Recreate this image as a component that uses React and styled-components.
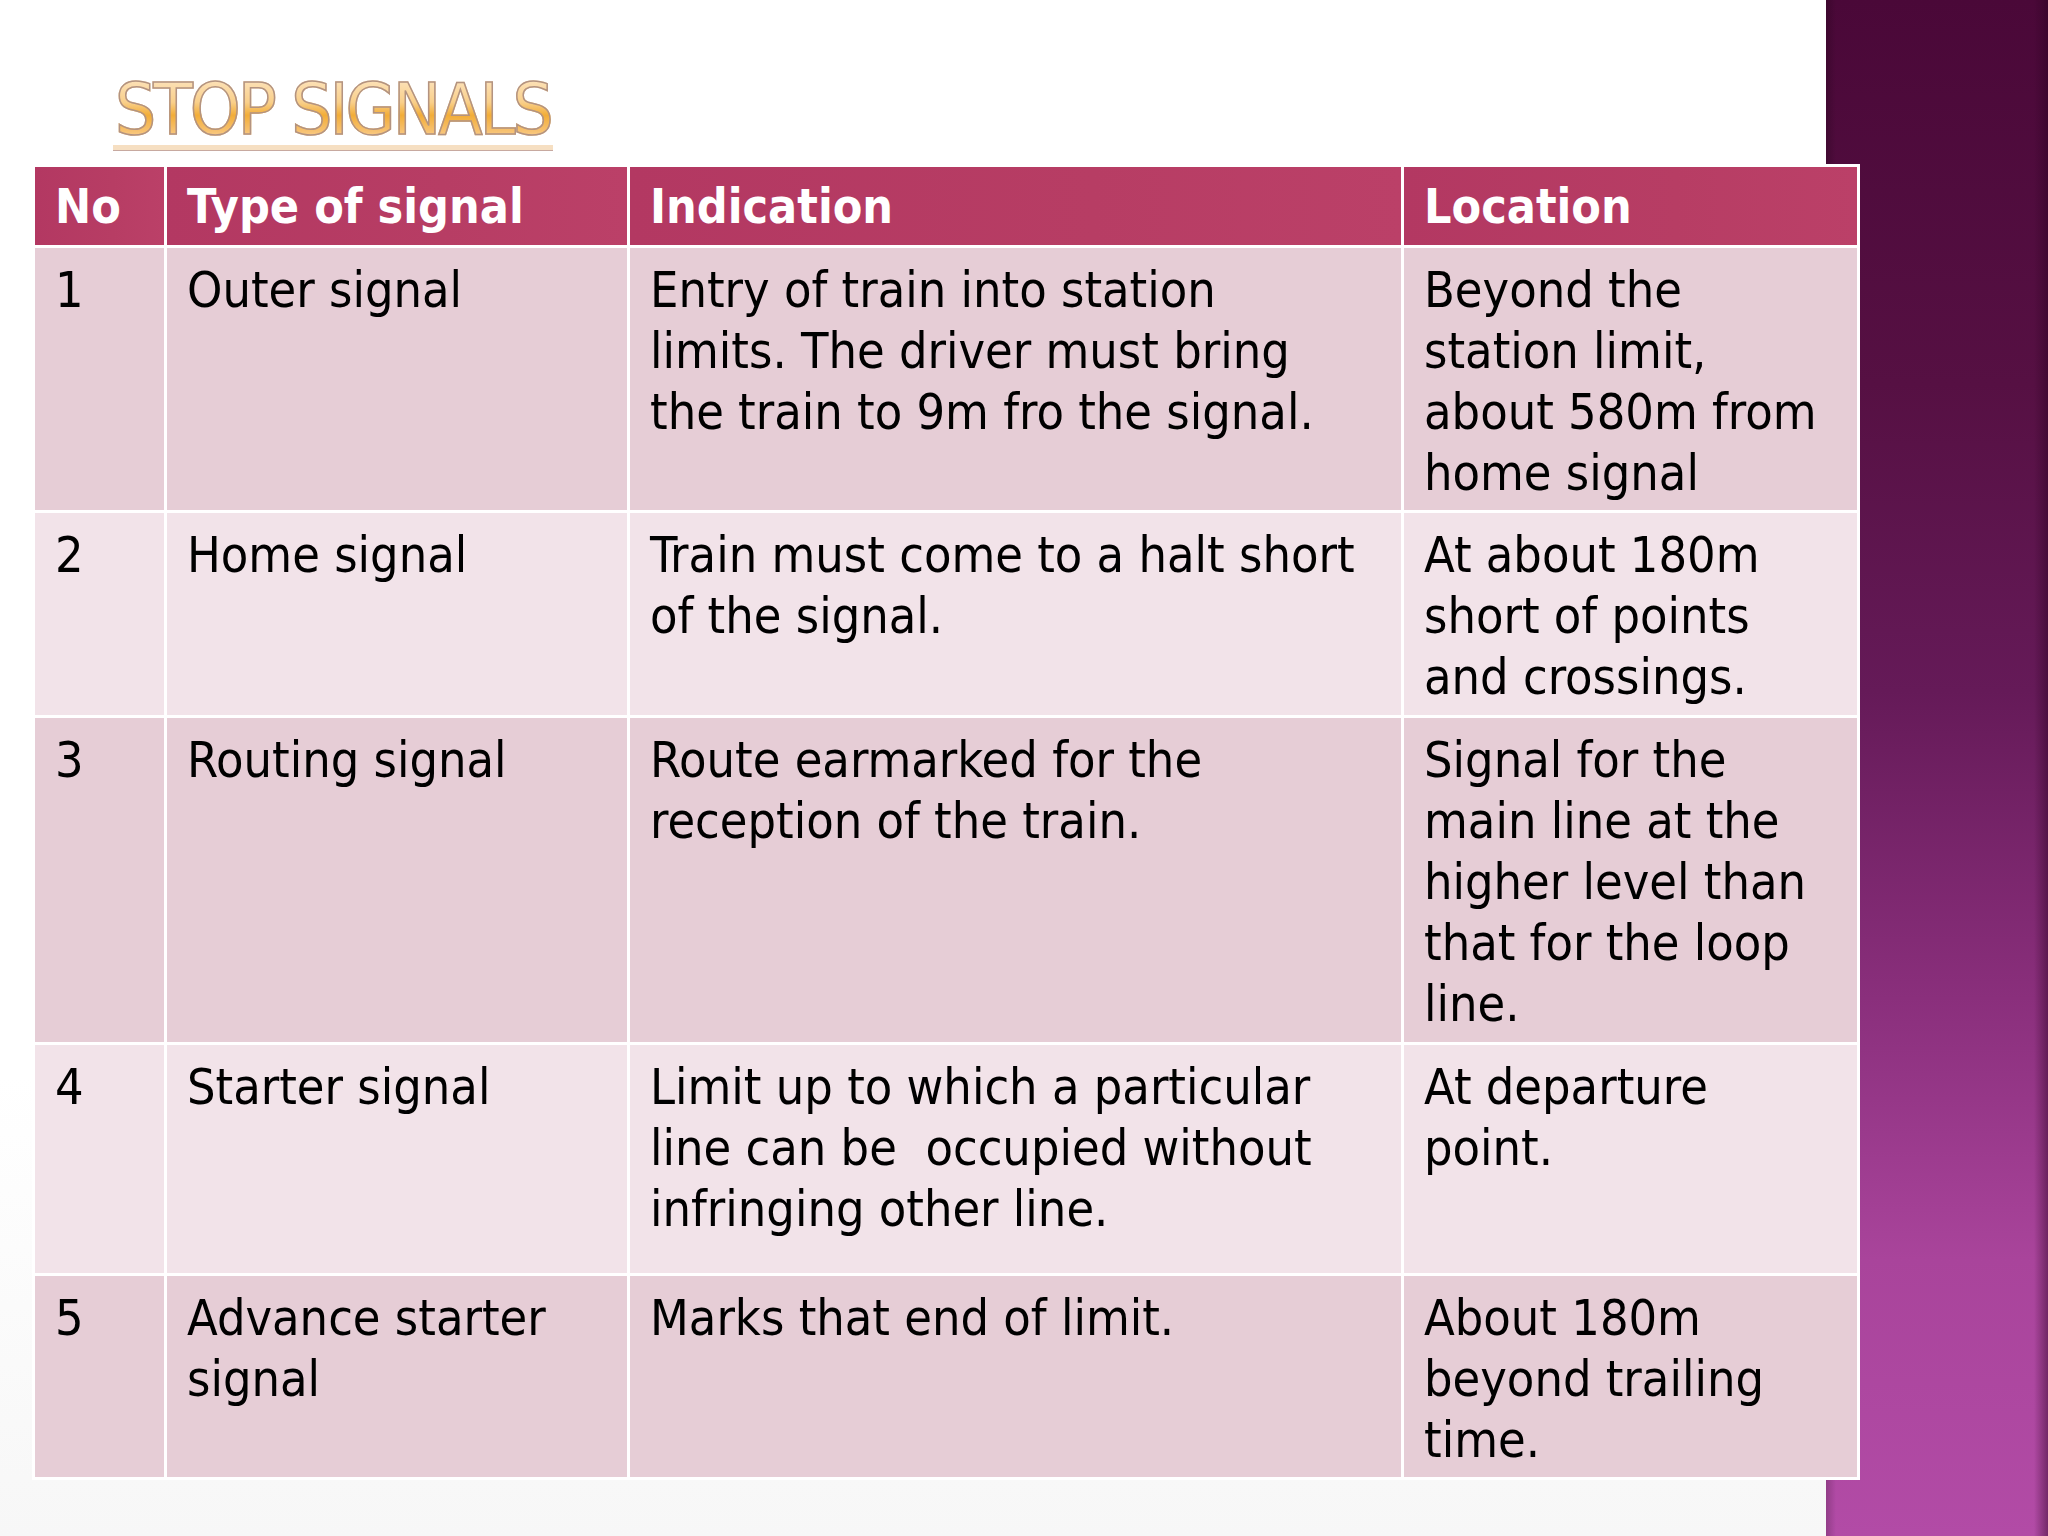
import React from 'react';
import styled, { createGlobalStyle } from 'styled-components';

const GlobalStyle = createGlobalStyle`
  html, body {
    margin: 0;
    padding: 0;
    background: #ffffff;
  }
`;

const FONT = `"Liberation Sans Narrow", "DejaVu Sans Condensed", "Liberation Sans", sans-serif`;

const Slide = styled.div`
  width: 2048px;
  height: 1536px;
  box-sizing: border-box;
  padding: 74px 0 0 35px;
  overflow: hidden;
  font-family: ${FONT};
  background:
    linear-gradient(90deg, rgba(0, 0, 0, 0.18) 0px, rgba(0, 0, 0, 0) 10px) 1826px 0 / 20px 100% no-repeat,
    linear-gradient(270deg, rgba(40, 0, 30, 0.45) 0px, rgba(40, 0, 30, 0) 14px) right 0 / 20px 100% no-repeat,
    linear-gradient(180deg, #4a0838 0%, #561043 25%, #651a58 45%, #8a2f7c 65%, #a9449b 82%, #b24ba6 100%) right 0 / 222px 100% no-repeat,
    linear-gradient(180deg, #ffffff 0%, #ffffff 70%, #f7f7f7 100%);
`;

const Title = styled.h1`
  display: inline-block;
  margin: 0 0 14px 78px;
  padding: 0 2px 1px;
  font-family: ${FONT};
  font-size: 72px;
  font-weight: 400;
  line-height: 70px;
  letter-spacing: -3px;
  color: transparent;
  background: linear-gradient(180deg, #fde6c4 0%, #f9cf8a 40%, #f2ad38 58%, #f7c170 80%, #fbdcae 100%);
  -webkit-background-clip: text;
  background-clip: text;
  -webkit-text-stroke: 1.5px #b39381;
  border-bottom: 5px solid #f6dfc2;
  box-shadow: 0 1px 0 #c7a9a0;
`;

const Table = styled.table`
  border-collapse: separate;
  border-spacing: 3px;
  background: #ffffff;
  table-layout: fixed;
  width: 1828px;
  margin-left: -3px;
`;

const HeadRow = styled.tr`
  height: 78px;
`;

const Row = styled.tr`
  height: ${p => p.$h}px;
`;

const HeadCell = styled.th`
  background: linear-gradient(90deg, #b33862 0%, #b73d64 60%, #bb4068 100%);
  color: #ffffff;
  text-align: left;
  vertical-align: middle;
  padding: 0 20px;
  font-family: ${FONT};
  font-size: 48px;
  font-weight: 700;
  line-height: 61px;
  white-space: nowrap;
`;

const Cell = styled.td`
  background: ${p => (p.$alt ? '#f2e3e9' : '#e6cdd6')};
  color: #000000;
  vertical-align: top;
  padding: 12px 20px 0;
  font-size: 50px;
  line-height: 61px;
  white-space: pre;
`;

const Line = styled.span`
  display: block;
`;

const widths = [129, 460, 771, 453];
const heads = ['No', 'Type of signal', 'Indication', 'Location'];

const rows = [
  {
    h: 262,
    cells: [
      ['1'],
      ['Outer signal'],
      ['Entry of train into station', 'limits. The driver must bring', 'the train to 9m fro the signal.'],
      ['Beyond the', 'station limit,', 'about 580m from', 'home signal'],
    ],
  },
  {
    h: 202,
    cells: [
      ['2'],
      ['Home signal'],
      ['Train must come to a halt short', 'of the signal.'],
      ['At about 180m', 'short of points', 'and crossings.'],
    ],
  },
  {
    h: 324,
    cells: [
      ['3'],
      ['Routing signal'],
      ['Route earmarked for the', 'reception of the train.'],
      ['Signal for the', 'main line at the', 'higher level than', 'that for the loop', 'line.'],
    ],
  },
  {
    h: 228,
    cells: [
      ['4'],
      ['Starter signal'],
      ['Limit up to which a particular', 'line can be  occupied without', 'infringing other line.'],
      ['At departure', 'point.'],
    ],
  },
  {
    h: 201,
    cells: [
      ['5'],
      ['Advance starter', 'signal'],
      ['Marks that end of limit.'],
      ['About 180m', 'beyond trailing', 'time.'],
    ],
  },
];

export default function App() {
  return (
    <>
      <GlobalStyle />
      <Slide>
        <Title>STOP SIGNALS</Title>
        <Table>
          <colgroup>
            {widths.map((w, i) => (
              <col key={i} style={{ width: w }} />
            ))}
          </colgroup>
          <thead>
            <HeadRow>
              {heads.map(h => (
                <HeadCell key={h}>{h}</HeadCell>
              ))}
            </HeadRow>
          </thead>
          <tbody>
            {rows.map((row, r) => (
              <Row key={r} $h={row.h}>
                {row.cells.map((lines, c) => (
                  <Cell key={c} $alt={r % 2 === 1}>
                    {lines.map((l, k) => (
                      <Line key={k}>{l}</Line>
                    ))}
                  </Cell>
                ))}
              </Row>
            ))}
          </tbody>
        </Table>
      </Slide>
    </>
  );
}
